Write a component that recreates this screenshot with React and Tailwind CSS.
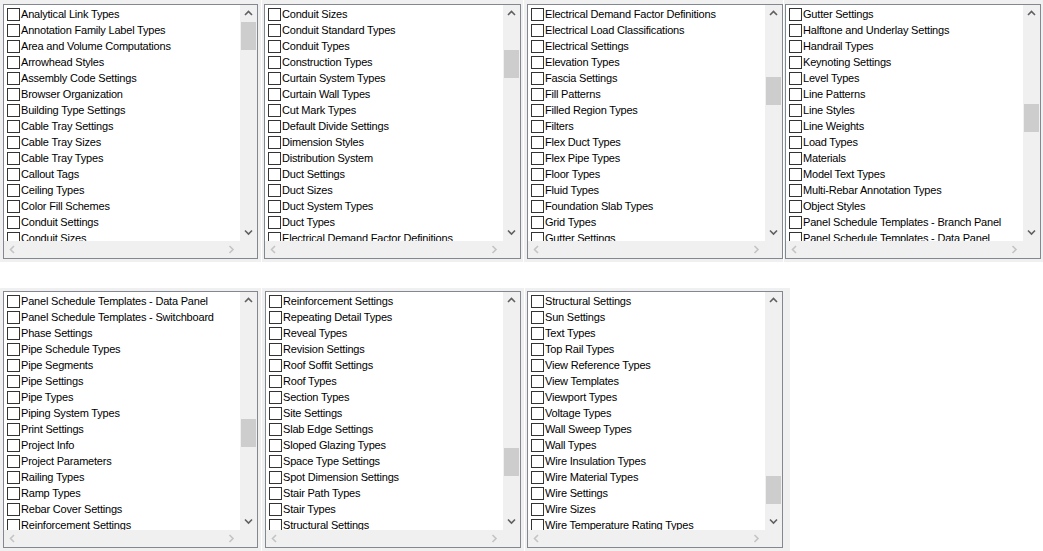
const lists = [
  {
    thumb: 0,
    items: [
      "Analytical Link Types",
      "Annotation Family Label Types",
      "Area and Volume Computations",
      "Arrowhead Styles",
      "Assembly Code Settings",
      "Browser Organization",
      "Building Type Settings",
      "Cable Tray Settings",
      "Cable Tray Sizes",
      "Cable Tray Types",
      "Callout Tags",
      "Ceiling Types",
      "Color Fill Schemes",
      "Conduit Settings",
      "Conduit Sizes",
    ],
  },
  {
    thumb: 28,
    items: [
      "Conduit Sizes",
      "Conduit Standard Types",
      "Conduit Types",
      "Construction Types",
      "Curtain System Types",
      "Curtain Wall Types",
      "Cut Mark Types",
      "Default Divide Settings",
      "Dimension Styles",
      "Distribution System",
      "Duct Settings",
      "Duct Sizes",
      "Duct System Types",
      "Duct Types",
      "Electrical Demand Factor Definitions",
    ],
  },
  {
    thumb: 55,
    items: [
      "Electrical Demand Factor Definitions",
      "Electrical Load Classifications",
      "Electrical Settings",
      "Elevation Types",
      "Fascia Settings",
      "Fill Patterns",
      "Filled Region Types",
      "Filters",
      "Flex Duct Types",
      "Flex Pipe Types",
      "Floor Types",
      "Fluid Types",
      "Foundation Slab Types",
      "Grid Types",
      "Gutter Settings",
    ],
  },
  {
    thumb: 82,
    items: [
      "Gutter Settings",
      "Halftone and Underlay Settings",
      "Handrail Types",
      "Keynoting Settings",
      "Level Types",
      "Line Patterns",
      "Line Styles",
      "Line Weights",
      "Load Types",
      "Materials",
      "Model Text Types",
      "Multi-Rebar Annotation Types",
      "Object Styles",
      "Panel Schedule Templates - Branch Panel",
      "Panel Schedule Templates - Data Panel",
    ],
  },
  {
    thumb: 110,
    items: [
      "Panel Schedule Templates - Data Panel",
      "Panel Schedule Templates - Switchboard",
      "Phase Settings",
      "Pipe Schedule Types",
      "Pipe Segments",
      "Pipe Settings",
      "Pipe Types",
      "Piping System Types",
      "Print Settings",
      "Project Info",
      "Project Parameters",
      "Railing Types",
      "Ramp Types",
      "Rebar Cover Settings",
      "Reinforcement Settings",
    ],
  },
  {
    thumb: 139,
    items: [
      "Reinforcement Settings",
      "Repeating Detail Types",
      "Reveal Types",
      "Revision Settings",
      "Roof Soffit Settings",
      "Roof Types",
      "Section Types",
      "Site Settings",
      "Slab Edge Settings",
      "Sloped Glazing Types",
      "Space Type Settings",
      "Spot Dimension Settings",
      "Stair Path Types",
      "Stair Types",
      "Structural Settings",
    ],
  },
  {
    thumb: 167,
    items: [
      "Structural Settings",
      "Sun Settings",
      "Text Types",
      "Top Rail Types",
      "View Reference Types",
      "View Templates",
      "Viewport Types",
      "Voltage Types",
      "Wall Sweep Types",
      "Wall Types",
      "Wire Insulation Types",
      "Wire Material Types",
      "Wire Settings",
      "Wire Sizes",
      "Wire Temperature Rating Types",
    ],
  },
];

const Chevron = ({ dir, color }) => {
  const paths = {
    up: "M1 5 L4.5 1.5 L8 5",
    down: "M1 1.5 L4.5 5 L8 1.5",
    left: "M5 1 L1.5 4.5 L5 8",
    right: "M1.5 1 L5 4.5 L1.5 8",
  };
  const vertical = dir === "up" || dir === "down";
  return (
    <svg
      width={vertical ? 9 : 7}
      height={vertical ? 7 : 9}
      viewBox={vertical ? "0 0 9 7" : "0 0 7 9"}
    >
      <path d={paths[dir]} fill="none" stroke={color} strokeWidth="1.6" />
    </svg>
  );
};

const ListBox = ({ items, thumb, width, height }) => (
  <div
    className="flex flex-col border border-[#828790] bg-white"
    style={{ width, height }}
  >
    <div className="flex flex-1 min-h-0">
      <div className="flex-1 min-w-0 overflow-hidden pt-[1px] pl-[3px]">
        {items.map((item, index) => (
          <div key={index} className="flex h-[16px] items-center">
            <div className="h-[13px] w-[13px] shrink-0 border border-[#333333] bg-white" />
            <span className="ml-[1px] whitespace-nowrap text-[11px] leading-none tracking-[-0.2px] text-black">
              {item}
            </span>
          </div>
        ))}
      </div>
      <div className="flex w-[17px] flex-col bg-[#f0f0f0]">
        <div className="flex h-[17px] items-center justify-center">
          <Chevron dir="up" color="#606060" />
        </div>
        <div className="flex flex-1 flex-col px-[1px]">
          <div
            className="h-[28px] w-full bg-[#cdcdcd]"
            style={{ marginTop: thumb }}
          />
        </div>
        <div className="flex h-[17px] items-center justify-center">
          <Chevron dir="down" color="#606060" />
        </div>
      </div>
    </div>
    <div className="flex h-[17px] bg-[#f0f0f0]">
      <div className="flex w-[17px] items-center justify-center">
        <Chevron dir="left" color="#c4c4c4" />
      </div>
      <div className="flex-1" />
      <div className="flex w-[17px] items-center justify-center">
        <Chevron dir="right" color="#c4c4c4" />
      </div>
      <div className="w-[17px]" />
    </div>
  </div>
);

export default function App() {
  return (
    <div
      className="h-[551px] w-[1043px] overflow-hidden bg-white"
      style={{ fontFamily: '"Liberation Sans", Arial, sans-serif' }}
    >
      <div className="flex h-[262px] bg-[#f0f0f0]">
        <div className="w-[261px] pl-[3px] pt-[4px]">
          <ListBox {...lists[0]} width={255} height={255} />
        </div>
        <div className="w-[262px] border-l border-white pl-[2px] pt-[4px]">
          <ListBox {...lists[1]} width={257} height={255} />
        </div>
        <div className="w-[260px] border-l border-white pl-[3px] pt-[4px]">
          <ListBox {...lists[2]} width={256} height={255} />
        </div>
        <div className="flex-1 border-l border-white pl-[1px] pt-[4px]">
          <ListBox {...lists[3]} width={256} height={255} />
        </div>
      </div>
      <div className="h-[26px]" />
      <div className="flex h-[263px] w-[790px] bg-[#f0f0f0]">
        <div className="w-[261px] pl-[3px] pt-[3px]">
          <ListBox {...lists[4]} width={255} height={257} />
        </div>
        <div className="w-[263px] border-l border-white pl-[3px] pt-[3px]">
          <ListBox {...lists[5]} width={256} height={257} />
        </div>
        <div className="flex-1 border-l border-white pl-[2px] pt-[3px]">
          <ListBox {...lists[6]} width={256} height={257} />
        </div>
      </div>
    </div>
  );
}
